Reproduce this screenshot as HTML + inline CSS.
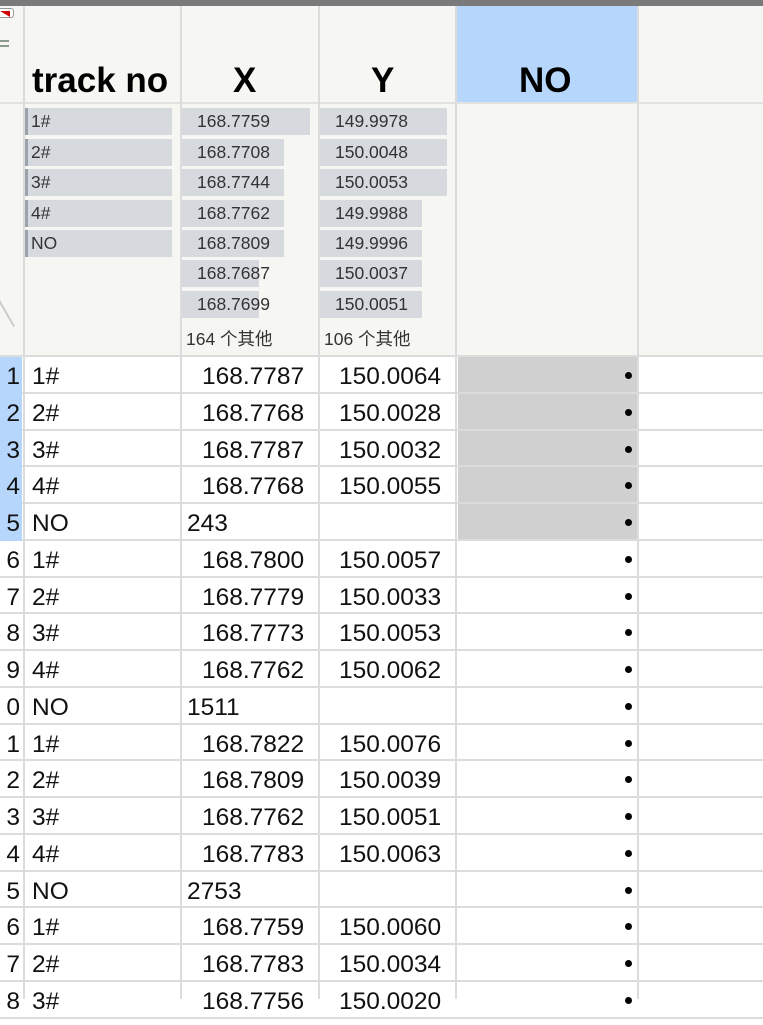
<!DOCTYPE html>
<html><head><meta charset="utf-8"><style>
*{margin:0;padding:0;box-sizing:border-box}
body{width:763px;height:999px;overflow:hidden;background:#fff;font-family:"Liberation Sans","Noto Sans CJK SC",sans-serif;position:relative}
.top{position:absolute;left:0;top:0;width:763px;height:6px;background:#7a7a7a}
.hdr{position:absolute;left:0;top:6px;width:763px;height:351px;background:#f6f6f3}
.v{position:absolute;top:6px;width:2px;height:993px;background:#dcdcdc}
.h{position:absolute;left:0;width:763px;height:2px;background:#dcdcdc}
.ht{position:absolute;font-weight:bold;font-size:35px;top:61px;color:#000}
.bar{position:absolute;height:27px;background:#d6d9de;font-size:17.5px;color:#333;line-height:27px}
.oth{position:absolute;font-size:17.5px;color:#333;top:326px}
.row{position:absolute;left:0;width:763px;height:36.75px;font-size:24.5px;color:#111;border-bottom:2px solid #dcdcdc}
.row span{position:absolute;top:6px}
.rn{left:0;width:22px;height:36.75px;text-align:right;padding-right:2px}
.sel .rn{background:#b6d6fb;top:0 !important;padding-top:6px}
.sel .nocell{background:#d0d0d0}
.nocell{position:absolute;left:458px;width:179px;top:0;height:34.75px}
.dot{position:absolute;left:625px;top:15px;width:7px;height:7px;border-radius:50%;background:#000}
</style></head><body>
<div class="top"></div>
<div class="hdr"></div>
<div style="position:absolute;left:457px;top:6px;width:181px;height:97px;background:#b6d6fb"></div>
<div style="position:absolute;left:0;top:8px;width:14px;height:10px;border:1px solid #999;border-left:none;border-radius:0 3px 3px 0;background:#fff"></div>
<div style="position:absolute;left:0;top:11px;width:0;height:0;border-left:10px solid transparent;border-top:6px solid #c00"></div>
<div style="position:absolute;left:0;top:40px;width:9px;height:2px;background:#8a9a8a"></div>
<div style="position:absolute;left:0;top:45px;width:9px;height:2px;background:#8a9a8a"></div>
<div class="h" style="top:102px;background:#e2e2e2"></div>
<div class="ht" style="left:32px">track no</div>
<div class="ht" style="left:233px">X</div>
<div class="ht" style="left:371px">Y</div>
<div class="ht" style="left:519px">NO</div>

<div class="bar" style="left:25px;top:108px;width:147px;border-left:3px solid #9aa4ae;padding-left:3px">1#</div>
<div class="bar" style="left:25px;top:139px;width:147px;border-left:3px solid #9aa4ae;padding-left:3px">2#</div>
<div class="bar" style="left:25px;top:169px;width:147px;border-left:3px solid #9aa4ae;padding-left:3px">3#</div>
<div class="bar" style="left:25px;top:200px;width:147px;border-left:3px solid #9aa4ae;padding-left:3px">4#</div>
<div class="bar" style="left:25px;top:230px;width:147px;border-left:3px solid #9aa4ae;padding-left:3px">NO</div>

<div class="bar" style="left:182px;top:108px;width:128px;padding-left:15px">168.7759</div>
<div class="bar" style="left:182px;top:139px;width:102px;padding-left:15px">168.7708</div>
<div class="bar" style="left:182px;top:169px;width:102px;padding-left:15px">168.7744</div>
<div class="bar" style="left:182px;top:200px;width:102px;padding-left:15px">168.7762</div>
<div class="bar" style="left:182px;top:230px;width:102px;padding-left:15px">168.7809</div>
<div class="bar" style="left:182px;top:260px;width:77px;padding-left:15px">168.7687</div>
<div class="bar" style="left:182px;top:291px;width:77px;padding-left:15px">168.7699</div>
<div class="oth" style="left:186px">164 个其他</div>

<div class="bar" style="left:320px;top:108px;width:127px;padding-left:15px">149.9978</div>
<div class="bar" style="left:320px;top:139px;width:127px;padding-left:15px">150.0048</div>
<div class="bar" style="left:320px;top:169px;width:127px;padding-left:15px">150.0053</div>
<div class="bar" style="left:320px;top:200px;width:102px;padding-left:15px">149.9988</div>
<div class="bar" style="left:320px;top:230px;width:102px;padding-left:15px">149.9996</div>
<div class="bar" style="left:320px;top:260px;width:102px;padding-left:15px">150.0037</div>
<div class="bar" style="left:320px;top:291px;width:102px;padding-left:15px">150.0051</div>
<div class="oth" style="left:324px">106 个其他</div>
<div style="position:absolute;left:0;top:300px;width:30px;height:2px;background:#ccc;transform:rotate(60deg);transform-origin:0 0"></div>

<div class="h" style="top:355px"></div>

<div class="row sel" style="top:357px"><span class="rn">1</span><span style="left:32px">1#</span><span style="left:202px">168.7787</span><span style="left:339px">150.0064</span><div class="nocell"></div><i class="dot"></i></div>
<div class="row sel" style="top:393.75px"><span class="rn">2</span><span style="left:32px">2#</span><span style="left:202px">168.7768</span><span style="left:339px">150.0028</span><div class="nocell"></div><i class="dot"></i></div>
<div class="row sel" style="top:430.5px"><span class="rn">3</span><span style="left:32px">3#</span><span style="left:202px">168.7787</span><span style="left:339px">150.0032</span><div class="nocell"></div><i class="dot"></i></div>
<div class="row sel" style="top:467.25px"><span class="rn">4</span><span style="left:32px">4#</span><span style="left:202px">168.7768</span><span style="left:339px">150.0055</span><div class="nocell"></div><i class="dot"></i></div>
<div class="row sel" style="top:504px"><span class="rn">5</span><span style="left:32px">NO</span><span style="left:187px">243</span><div class="nocell"></div><i class="dot"></i></div>
<div class="row" style="top:540.75px"><span class="rn">6</span><span style="left:32px">1#</span><span style="left:202px">168.7800</span><span style="left:339px">150.0057</span><i class="dot"></i></div>
<div class="row" style="top:577.5px"><span class="rn">7</span><span style="left:32px">2#</span><span style="left:202px">168.7779</span><span style="left:339px">150.0033</span><i class="dot"></i></div>
<div class="row" style="top:614.25px"><span class="rn">8</span><span style="left:32px">3#</span><span style="left:202px">168.7773</span><span style="left:339px">150.0053</span><i class="dot"></i></div>
<div class="row" style="top:651px"><span class="rn">9</span><span style="left:32px">4#</span><span style="left:202px">168.7762</span><span style="left:339px">150.0062</span><i class="dot"></i></div>
<div class="row" style="top:687.75px"><span class="rn">0</span><span style="left:32px">NO</span><span style="left:187px">1511</span><i class="dot"></i></div>
<div class="row" style="top:724.5px"><span class="rn">1</span><span style="left:32px">1#</span><span style="left:202px">168.7822</span><span style="left:339px">150.0076</span><i class="dot"></i></div>
<div class="row" style="top:761.25px"><span class="rn">2</span><span style="left:32px">2#</span><span style="left:202px">168.7809</span><span style="left:339px">150.0039</span><i class="dot"></i></div>
<div class="row" style="top:798px"><span class="rn">3</span><span style="left:32px">3#</span><span style="left:202px">168.7762</span><span style="left:339px">150.0051</span><i class="dot"></i></div>
<div class="row" style="top:834.75px"><span class="rn">4</span><span style="left:32px">4#</span><span style="left:202px">168.7783</span><span style="left:339px">150.0063</span><i class="dot"></i></div>
<div class="row" style="top:871.5px"><span class="rn">5</span><span style="left:32px">NO</span><span style="left:187px">2753</span><i class="dot"></i></div>
<div class="row" style="top:908.25px"><span class="rn">6</span><span style="left:32px">1#</span><span style="left:202px">168.7759</span><span style="left:339px">150.0060</span><i class="dot"></i></div>
<div class="row" style="top:945px"><span class="rn">7</span><span style="left:32px">2#</span><span style="left:202px">168.7783</span><span style="left:339px">150.0034</span><i class="dot"></i></div>
<div class="row" style="top:981.75px"><span class="rn">8</span><span style="left:32px">3#</span><span style="left:202px">168.7756</span><span style="left:339px">150.0020</span><i class="dot"></i></div>

<div class="v" style="left:23px"></div>
<div class="v" style="left:180px"></div>
<div class="v" style="left:318px"></div>
<div class="v" style="left:455px"></div>
<div class="v" style="left:637px"></div>
</body></html>
